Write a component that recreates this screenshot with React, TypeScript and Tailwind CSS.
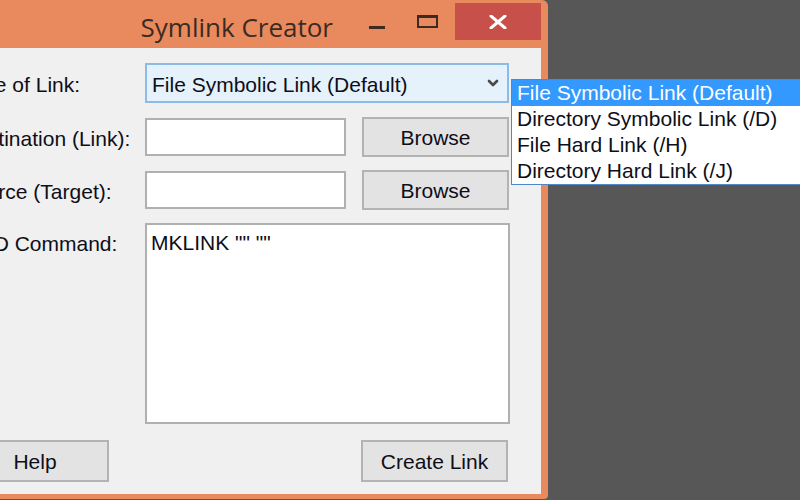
import { ChevronDown } from 'lucide-react';

const linkTypes = [
  'File Symbolic Link (Default)',
  'Directory Symbolic Link (/D)',
  'File Hard Link (/H)',
  'Directory Hard Link (/J)',
];

function WinButton({ label, className = '' }: { label: string; className?: string }) {
  return (
    <button
      className={`h-full border-2 border-[#b3b3b3] bg-[#e3e3e3] pt-[1px] text-[21px] text-[#0e0e18] ${className}`}
    >
      {label}
    </button>
  );
}

function Label({ text }: { text: string }) {
  return (
    <div className="w-[184px] shrink-0 pt-[4px] text-[21px] whitespace-nowrap text-[#0e0e18]">{text}</div>
  );
}

export default function App() {
  return (
    <div
      className="relative h-[500px] w-[800px] overflow-hidden bg-[#575757]"
      style={{ fontFamily: '"Liberation Sans", Arial, sans-serif' }}
    >
      {/* window frame, left side runs off the screen */}
      <div className="ml-[-50px] flex h-[499px] w-[598px] flex-col rounded-tr-[6px] rounded-br-[4px] bg-[#e98a5e] pb-[5px] pl-[8px] pr-[7px]">
        {/* title bar */}
        <div className="flex h-[48px] shrink-0 items-start justify-end">
          <div
            className="mt-[6px] text-[26px] leading-[42px] text-[#3b2b22]"
            style={{ fontFamily: '"Open Sans", "Noto Sans", sans-serif' }}
          >
            Symlink Creator
          </div>
          <div className="ml-[36px] mt-[26px] h-[3px] w-[16px] bg-[#3b2b22]" />
          <div className="ml-[32px] mt-[15px] h-[13px] w-[21px] border-2 border-t-[3px] border-[#3b2b22]" />
          <div className="ml-[17px] mt-[3px] flex h-[37px] w-[86px] items-center justify-center bg-[#c8504b]">
            <svg width="20" height="14" viewBox="0 0 20 14">
              <path d="M3 1 L17 13 M17 1 L3 13" stroke="#ffffff" strokeWidth="3" strokeLinecap="round" />
            </svg>
          </div>
        </div>

        {/* client area */}
        <div className="flex flex-1 flex-col bg-[#f0f0f0] pl-[3px] pt-[15px]">
          <div className="flex h-[40px] items-center">
            <Label text="Type of Link:" />
            <div className="flex h-full w-[364px] items-center justify-between border-2 border-[#8dbbe8] bg-[#e5f1fb] pl-[5px] pr-[6px] text-[21px] text-[#0e0e18]">
              <span className="pt-[4px]">File Symbolic Link (Default)</span>
              <ChevronDown className="h-[16px] w-[16px] text-[#4a4a4a]" strokeWidth={4} />
            </div>
          </div>

          <div className="mt-[14px] flex h-[40px] items-center">
            <Label text="Destination (Link):" />
            <input className="h-[38px] w-[201px] border-2 border-[#b0b0b0] bg-white outline-none" />
            <WinButton label="Browse" className="ml-[16px] w-[147px]" />
          </div>

          <div className="mt-[13px] flex h-[40px] items-center">
            <Label text="Source (Target):" />
            <input className="h-[38px] w-[201px] border-2 border-[#b0b0b0] bg-white outline-none" />
            <WinButton label="Browse" className="ml-[16px] w-[147px]" />
          </div>

          <div className="mt-[13px] flex h-[201px] items-start">
            <div className="pt-[1px]">
              <Label text="CMD Command:" />
            </div>
            <textarea
              readOnly
              value={'MKLINK "" ""'}
              className="h-full w-[365px] resize-none border-2 border-[#b0b0b0] bg-white px-[4px] pt-[5px] text-[21px] leading-[26px] text-[#0e0e18] outline-none"
            />
          </div>

          <div className="mt-[16px] flex h-[42px]">
            <WinButton label="Help" className="w-[148px]" />
            <WinButton label="Create Link" className="ml-[252px] w-[147px]" />
          </div>
        </div>
      </div>

      {/* open dropdown list */}
      <div className="absolute left-[511px] top-[79px] w-[300px] border border-[#4f88c8] bg-white text-[21px] text-[#0e0e18]">
        {linkTypes.map((t, i) => (
          <div
            key={t}
            className={`h-[26px] whitespace-nowrap pl-[5px] leading-[26px] ${i === 0 ? 'bg-[#3399ff] text-white' : ''}`}
          >
            {t}
          </div>
        ))}
      </div>
    </div>
  );
}
